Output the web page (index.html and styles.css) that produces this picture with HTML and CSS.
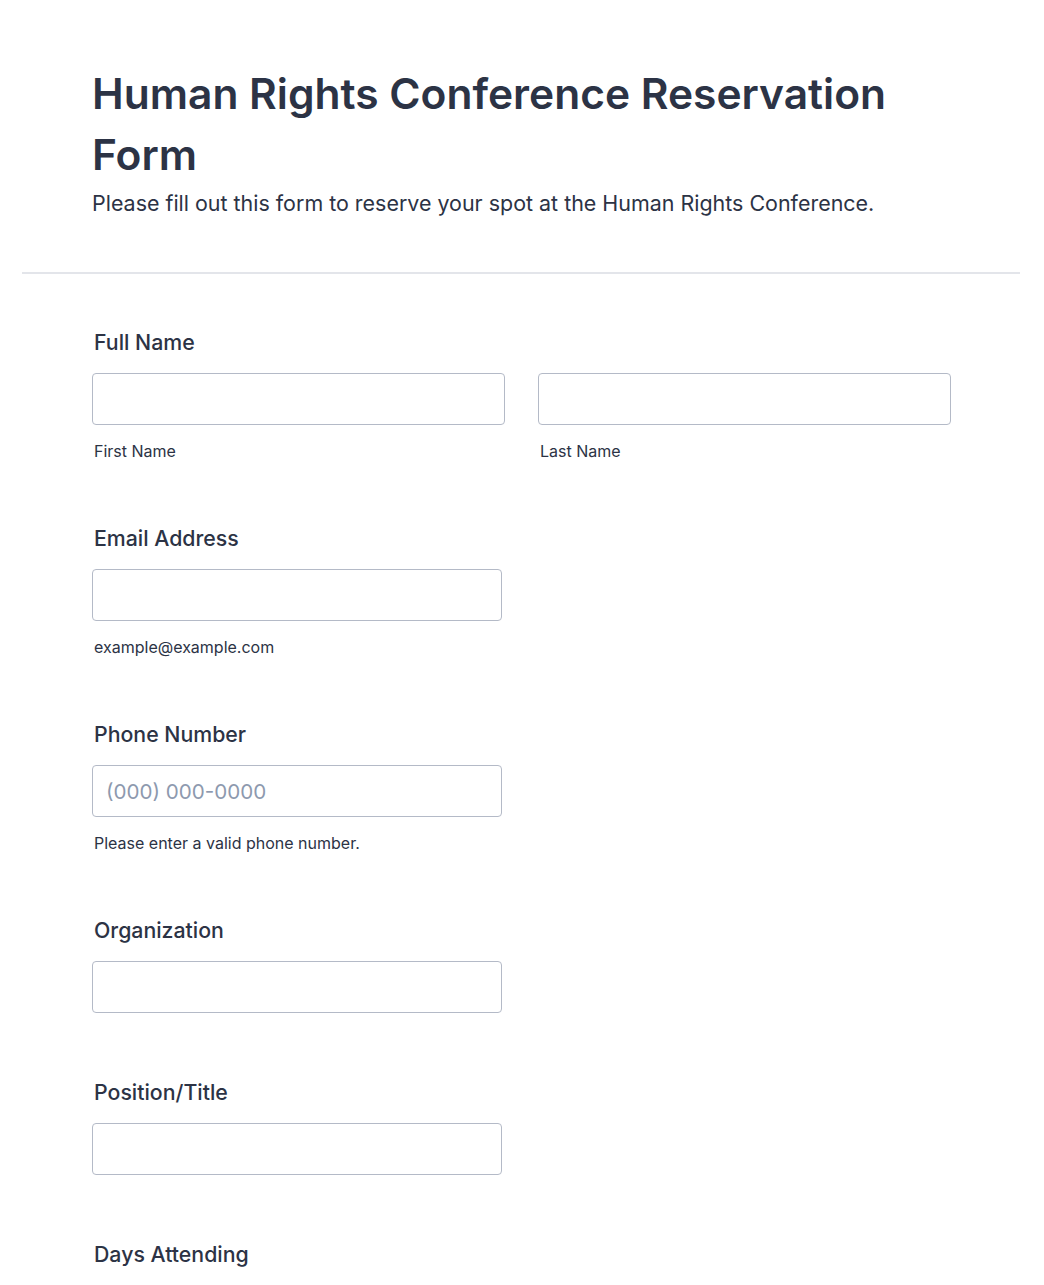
FILE: index.html
```html
<!DOCTYPE html>
<html lang="en">
  <head>
    <meta charset="UTF-8">
    <meta name="viewport" content="width=device-width, initial-scale=1.0">
    <title>Human Rights Conference Reservation Form</title>
    <link rel="stylesheet" href="styles.css">
  </head>

  <body>
    <form class="form-all">

      <div class="form-header">
        <h1 class="form-title">Human Rights Conference Reservation Form</h1>
        <p class="form-subtitle">Please fill out this form to reserve your spot at the Human Rights Conference.</p>
      </div>

      <ul class="form-fields">
        <li class="form-line has-sublabel">
          <label class="form-label">Full Name</label>
          <div class="form-pair">
            <div class="form-sub">
              <input class="form-input" type="text">
              <span class="form-sublabel">First Name</span>
            </div>
            <div class="form-sub">
              <input class="form-input" type="text">
              <span class="form-sublabel">Last Name</span>
            </div>
          </div>
        </li>

        <li class="form-line has-sublabel">
          <label class="form-label">Email Address</label>
          <div class="form-single">
            <input class="form-input" type="email">
            <span class="form-sublabel">example@example.com</span>
          </div>
        </li>

        <li class="form-line has-sublabel">
          <label class="form-label">Phone Number</label>
          <div class="form-single">
            <input class="form-input" type="tel" placeholder="(000) 000-0000">
            <span class="form-sublabel">Please enter a valid phone number.</span>
          </div>
        </li>

        <li class="form-line">
          <label class="form-label">Organization</label>
          <div class="form-single">
            <input class="form-input" type="text">
          </div>
        </li>

        <li class="form-line">
          <label class="form-label">Position/Title</label>
          <div class="form-single">
            <input class="form-input" type="text">
          </div>
        </li>

        <li class="form-line">
          <label class="form-label">Days Attending</label>
        </li>
      </ul>

    </form>
  </body>
</html>
```

FILE: styles.css
```css
/* Page */
html {
  box-sizing: border-box;
}

*,
*::before,
*::after {
  box-sizing: inherit;
}

body {
  margin: 0;
  background-color: #ffffff;
  color: #2c3345;
  font-family: Inter, "Noto Sans", Arial, sans-serif;
}

.form-all {
  margin: 0 24px 0 22px;
}

/* Header */
.form-header {
  padding: 63px 70px 54px 70px;
  border-bottom: 2px solid #e3e5ea;
}

.form-title {
  margin: 0;
  font-size: 42.5px;
  font-weight: 600;
  line-height: 61px;
  max-width: 860px;
}

.form-subtitle {
  margin: 3px 0 0 0;
  font-size: 21.45px;
  line-height: 30px;
}

/* Fields */
.form-fields {
  list-style: none;
  margin: 0;
  padding: 55px 0 0 70px;
}

.form-line {
  padding-bottom: 66px;
}

.form-line.has-sublabel {
  padding-bottom: 64px;
}

.form-label {
  display: block;
  margin: 0 0 18px 2px;
  font-size: 21.3px;
  font-weight: 500;
  line-height: 26px;
}

.form-pair {
  display: grid;
  grid-template-columns: 413px 413px;
  column-gap: 33px;
}

.form-single {
  width: 410px;
}

.form-input {
  display: block;
  width: 100%;
  height: 52px;
  margin: 0;
  padding: 0 13px;
  border: 1px solid #b4bac7;
  border-radius: 4px;
  background-color: #ffffff;
  color: #2c3345;
  font-family: inherit;
  font-size: 20.6px;
}

.form-input::placeholder {
  color: #8d99ae;
}

.form-sublabel {
  display: block;
  margin: 16px 0 0 2px;
  font-size: 16px;
  line-height: 20px;
}
```
